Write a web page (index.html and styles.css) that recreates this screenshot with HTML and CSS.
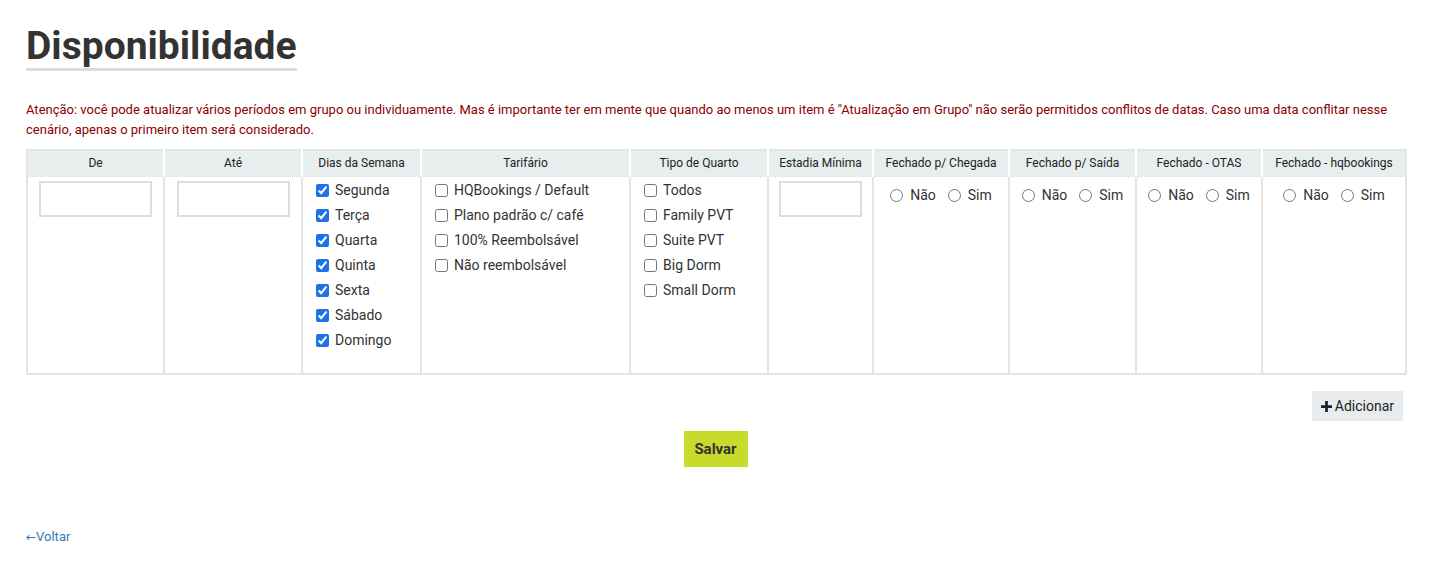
FILE: index.html
```html
<!DOCTYPE html>
<html lang="pt">
<head>
<meta charset="utf-8">
<title>Disponibilidade</title>
<link rel="stylesheet" href="styles.css">
</head>
<body>
<div class="page">
  <h1 class="title">Disponibilidade</h1>
  <p class="notice">Atenção: você pode atualizar vários períodos em grupo ou individuamente. Mas é importante ter em mente que quando ao menos um item é "Atualização em Grupo" não serão permitidos conflitos de datas. Caso uma data conflitar nesse cenário, apenas o primeiro item será considerado.</p>
  <table class="grid">
    <colgroup>
      <col class="c1"><col class="c2"><col class="c3"><col class="c4"><col class="c5">
      <col class="c6"><col class="c7"><col class="c8"><col class="c9"><col class="c10">
    </colgroup>
    <thead>
      <tr>
        <th>De</th><th>Até</th><th>Dias da Semana</th><th>Tarifário</th><th>Tipo de Quarto</th>
        <th>Estadia Mínima</th><th>Fechado p/ Chegada</th><th>Fechado p/ Saída</th><th>Fechado - OTAS</th><th>Fechado - hqbookings</th>
      </tr>
    </thead>
    <tbody>
      <tr>
        <td class="center"><input class="box" type="text"></td>
        <td class="center"><input class="box" type="text"></td>
        <td class="list">
          <label><input type="checkbox" checked> Segunda</label>
          <label><input type="checkbox" checked> Terça</label>
          <label><input type="checkbox" checked> Quarta</label>
          <label><input type="checkbox" checked> Quinta</label>
          <label><input type="checkbox" checked> Sexta</label>
          <label><input type="checkbox" checked> Sábado</label>
          <label><input type="checkbox" checked> Domingo</label>
        </td>
        <td class="list">
          <label><input type="checkbox"> HQBookings / Default</label>
          <label><input type="checkbox"> Plano padrão c/ café</label>
          <label><input type="checkbox"> 100% Reembolsável</label>
          <label><input type="checkbox"> Não reembolsável</label>
        </td>
        <td class="list">
          <label><input type="checkbox"> Todos</label>
          <label><input type="checkbox"> Family PVT</label>
          <label><input type="checkbox"> Suite PVT</label>
          <label><input type="checkbox"> Big Dorm</label>
          <label><input type="checkbox"> Small Dorm</label>
        </td>
        <td class="center"><input class="box small" type="text"></td>
        <td class="radios"><label><input type="radio" name="r1"> Não</label><label><input type="radio" name="r1"> Sim</label></td>
        <td class="radios"><label><input type="radio" name="r2"> Não</label><label><input type="radio" name="r2"> Sim</label></td>
        <td class="radios"><label><input type="radio" name="r3"> Não</label><label><input type="radio" name="r3"> Sim</label></td>
        <td class="radios"><label><input type="radio" name="r4"> Não</label><label><input type="radio" name="r4"> Sim</label></td>
      </tr>
    </tbody>
  </table>
  <div class="add-row">
    <button class="btn-add" type="button"><svg class="plus" viewBox="0 0 12 12" width="11" height="11"><path d="M4.5 0h3v4.5H12v3H7.5V12h-3V7.5H0v-3h4.5z" fill="#222"/></svg>Adicionar</button>
  </div>
  <div class="save-row">
    <button class="btn-save" type="button">Salvar</button>
  </div>
  <a class="back" href="#"><span class="arrow">←</span>Voltar</a>
</div>
</body>
</html>
```

FILE: styles.css
```css
* { box-sizing: border-box; }
html, body { margin: 0; padding: 0; background: #fff; }
body { font-family: Roboto, "Liberation Sans", Arial, sans-serif; color: #333; }
.page { padding: 25px 28px 0 26px; }
.title {
  display: inline-block;
  margin: 0;
  font-size: 39px;
  font-weight: 700;
  line-height: 43px;
  color: #333;
  border-bottom: 3px solid #ddd;
  padding-bottom: 0;
}
.notice {
  margin: 29px 0 0 0;
  font-size: 13px;
  line-height: 20px;
  color: #8b0000;
  padding-right: 10px;
}
.grid {
  margin-top: 9px;
  width: 1379px;
  border-collapse: collapse;
  table-layout: fixed;
  border: 2px solid #e4e4e4;
}
.c1 { width: 137px; } .c2 { width: 138px; } .c3 { width: 119px; } .c4 { width: 209px; }
.c5 { width: 138px; } .c6 { width: 105px; } .c7 { width: 136px; } .c8 { width: 127px; }
.c9 { width: 126px; } .c10 { width: 144px; }
.grid th {
  background: #e8eeee;
  font-size: 12px;
  font-weight: 400;
  color: #222;
  height: 26px;
  padding: 0 4px;
  border-left: 2px solid #fff;
  border-bottom: 1px dotted #cfd6d6;
  text-align: center;
  white-space: nowrap;
}
.grid th:first-child { border-left: none; }
.grid td {
  vertical-align: top;
  height: 198px;
  border-left: 2px solid #e4e4e4;
  padding: 4px 0 0 0;
}
.grid td:first-child { border-left: none; }
.center { text-align: center; }
.box {
  width: 113px;
  height: 36px;
  border: 2px solid #dedede;
  background: #fff;
  margin: 0;
}
.box.small { width: 83px; }
.grid td.list { padding: 1px 0 0 12px; }
.list label {
  display: flex;
  align-items: center;
  height: 25px;
  font-size: 14px;
  color: #333;
  white-space: nowrap;
}
.list input[type=checkbox] {
  width: 13px;
  height: 13px;
  margin: 0 6px 0 1px;
  accent-color: #1a73e8;
}
.grid td.radios {
  text-align: center;
  white-space: nowrap;
  padding-top: 10px;
}
.radios label {
  display: inline-flex;
  align-items: center;
  font-size: 14px;
  color: #333;
  margin: 0 6px;
}
.radios input[type=radio] {
  width: 13px;
  height: 13px;
  margin: 0 7px 0 0;
}
.add-row {
  display: flex;
  justify-content: flex-end;
  margin-top: 16px;
  padding-right: 3px;
}
.btn-add {
  display: inline-flex;
  align-items: center;
  gap: 3px;
  height: 30px;
  padding: 0 9px 0 9px;
  background: #e9ecee;
  border: none;
  font-family: Roboto, "Liberation Sans", Arial, sans-serif;
  font-size: 14px;
  color: #222;
}
.save-row {
  display: flex;
  justify-content: center;
  margin-top: 10px;
}
.btn-save {
  height: 36px;
  width: 64px;
  background: #c8da2b;
  border: none;
  font-family: Roboto, "Liberation Sans", Arial, sans-serif;
  font-size: 15px;
  font-weight: 700;
  color: #333;
  margin-right: 1px;
}
.back {
  display: inline-block;
  margin-top: 62px;
  font-size: 13px;
  color: #337ab7;
  text-decoration: none;
}
.arrow { font-family: "DejaVu Sans", sans-serif; font-size: 12px; }
```
